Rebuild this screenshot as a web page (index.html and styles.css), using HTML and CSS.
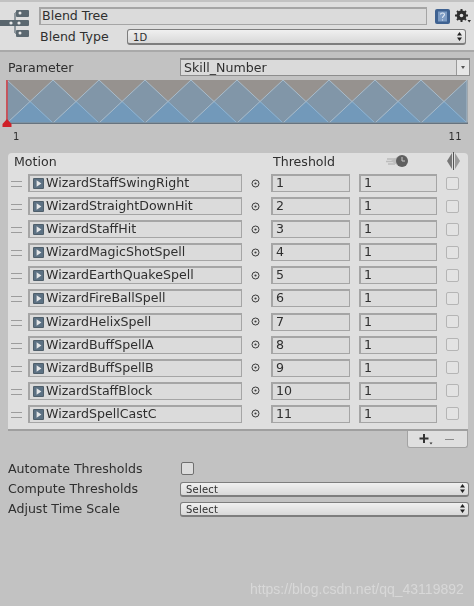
FILE: index.html
```html
<!DOCTYPE html>
<html lang="en">
<head>
<meta charset="utf-8">
<title>Blend Tree</title>
<link rel="stylesheet" href="styles.css">
</head>
<body>
<svg class="defs" width="0" height="0" aria-hidden="true">
  <symbol id="clip" viewBox="0 0 11 11">
    <rect width="11" height="11" rx="1" fill="#4f5f6b"/>
    <rect x="1" y="1" width="9" height="9" fill="#5c7183"/>
    <path d="M3.6 2.2 8.4 5.5 3.6 8.8Z" fill="#e4e6e8"/>
  </symbol>
  <symbol id="target" viewBox="0 0 9 9">
    <circle cx="4.5" cy="4.5" r="3.5" fill="none" stroke="#3c3c3c" stroke-width="1"/>
    <circle cx="4.5" cy="4.5" r="1.1" fill="#3c3c3c"/>
  </symbol>
  <symbol id="updown" viewBox="0 0 5 9">
    <path d="M2.5 0 5 3.4H0ZM2.5 9 0 5.6H5Z" fill="#222"/>
  </symbol>
</svg>

<header class="head">
  <svg class="tree" viewBox="0 0 30 30" aria-hidden="true">
    <path d="M5 15H22M15 5V25M15 5H20M15 25H20" stroke="#8f989e" stroke-width="2" fill="none"/>
    <rect x="0" y="12" width="14" height="6" fill="#59656d"/>
    <rect x="9" y="12" width="20" height="6" rx="1" fill="#5b6870"/>
    <rect x="16" y="2" width="13" height="7" rx="1" fill="#5b6870"/>
    <rect x="16" y="22" width="13" height="7" rx="1" fill="#5b6870"/>
    <circle cx="11" cy="15" r="1.6" fill="#e8e8e8"/>
    <circle cx="19" cy="15" r="1.6" fill="#e8e8e8"/>
    <circle cx="20" cy="5" r="1.5" fill="#e8e8e8"/>
    <circle cx="20" cy="25" r="1.5" fill="#e8e8e8"/>
  </svg>
  <div class="head-main">
    <div class="head-top">
      <div class="field name">Blend Tree</div>
      <svg class="help" viewBox="0 0 15 15" aria-hidden="true">
        <rect width="15" height="15" rx="2" fill="#3f6291"/>
        <rect x="3" y="2.5" width="9" height="10" fill="#7d9cc4"/>
        <path d="M5.5 5.5C5.5 3.5 9.5 3.5 9.5 5.5 9.5 7 7.5 7 7.5 9M7.5 10.5V11.5" fill="none" stroke="#dfe8f3" stroke-width="1.1"/>
      </svg>
      <svg class="gear" viewBox="0 0 16 15" aria-hidden="true">
        <circle cx="6.5" cy="6.5" r="3.7" fill="none" stroke="#2e2e2e" stroke-width="2.4"/>
        <path d="M6.5 0V13M0 6.5H13M2 2 11 11M11 2 2 11" stroke="#2e2e2e" stroke-width="2" />
        <circle cx="6.5" cy="6.5" r="1.8" fill="#dedede"/>
        <path d="M12.5 11H16L14.2 13.5Z" fill="#2e2e2e"/>
      </svg>
    </div>
    <div class="head-type">
      <span class="type-label">Blend Type</span>
      <div class="popup type-popup"><span>1D</span><svg class="updown"><use href="#updown"/></svg></div>
    </div>
  </div>
</header>

<section class="param">
  <span class="param-label">Parameter</span>
  <div class="param-field"><span class="param-value">Skill_Number</span><span class="param-drop"><i></i></span></div>
</section>

<section class="graph-wrap">
  <svg class="graph" viewBox="0 0 461 44" aria-hidden="true">
    <rect width="461" height="43" fill="#96928f"/>
    <g class="tri">
      <polygon points="0,0 46,43 0,43"/>
      <polygon points="46,0 92,43 0,43"/>
      <polygon points="92,0 138,43 46,43"/>
      <polygon points="138,0 184,43 92,43"/>
      <polygon points="184,0 230,43 138,43"/>
      <polygon points="230,0 276,43 184,43"/>
      <polygon points="276,0 322,43 230,43"/>
      <polygon points="322,0 368,43 276,43"/>
      <polygon points="368,0 414,43 322,43"/>
      <polygon points="414,0 460,43 368,43"/>
      <polygon points="460,0 460,43 414,43"/>
    </g>
    <rect y="42.6" width="461" height="1.2" fill="#55626e"/>
  </svg>
  <svg class="marker" viewBox="0 0 10 48" aria-hidden="true">
    <rect x="4.3" y="0" width="1.3" height="42" fill="#d0242c"/>
    <path d="M5 39 9.5 44V47H.5V44Z" fill="#cf2028"/>
  </svg>
  <div class="scale"><span>1</span><span>11</span></div>
</section>

<section class="list">
  <div class="list-head">
    <span class="h-motion">Motion</span>
    <span class="h-threshold">Threshold</span>
    <svg class="h-speed" viewBox="0 0 26 14" aria-hidden="true">
      <path d="M1 5H9M0 7.5H9M2 10H9" stroke="#bcbcbc" stroke-width="1.3"/>
      <path d="M5 7 11 3V11Z" fill="#bdbdbd"/>
      <circle cx="16" cy="7" r="6" fill="#5f5f5f"/>
      <path d="M16 3V7H19" fill="none" stroke="#c9c9c9" stroke-width="1"/>
    </svg>
    <svg class="h-mirror" viewBox="0 0 15 18" aria-hidden="true">
      <path d="M6 1 1 9 6 17Z" fill="#777"/>
      <path d="M9 1 14 9 9 17Z" fill="#9a9a9a"/>
      <path d="M7.5 0V18" stroke="#555" stroke-width="1"/>
    </svg>
  </div>
  <div class="rows">
    <div class="row"><span class="grip"></span><div class="field motion"><svg class="clip"><use href="#clip"/></svg>WizardStaffSwingRight</div><svg class="target"><use href="#target"/></svg><div class="field num">1</div><div class="field num num2">1</div><span class="check"></span></div>
    <div class="row"><span class="grip"></span><div class="field motion"><svg class="clip"><use href="#clip"/></svg>WizardStraightDownHit</div><svg class="target"><use href="#target"/></svg><div class="field num">2</div><div class="field num num2">1</div><span class="check"></span></div>
    <div class="row"><span class="grip"></span><div class="field motion"><svg class="clip"><use href="#clip"/></svg>WizardStaffHit</div><svg class="target"><use href="#target"/></svg><div class="field num">3</div><div class="field num num2">1</div><span class="check"></span></div>
    <div class="row"><span class="grip"></span><div class="field motion"><svg class="clip"><use href="#clip"/></svg>WizardMagicShotSpell</div><svg class="target"><use href="#target"/></svg><div class="field num">4</div><div class="field num num2">1</div><span class="check"></span></div>
    <div class="row"><span class="grip"></span><div class="field motion"><svg class="clip"><use href="#clip"/></svg>WizardEarthQuakeSpell</div><svg class="target"><use href="#target"/></svg><div class="field num">5</div><div class="field num num2">1</div><span class="check"></span></div>
    <div class="row"><span class="grip"></span><div class="field motion"><svg class="clip"><use href="#clip"/></svg>WizardFireBallSpell</div><svg class="target"><use href="#target"/></svg><div class="field num">6</div><div class="field num num2">1</div><span class="check"></span></div>
    <div class="row"><span class="grip"></span><div class="field motion"><svg class="clip"><use href="#clip"/></svg>WizardHelixSpell</div><svg class="target"><use href="#target"/></svg><div class="field num">7</div><div class="field num num2">1</div><span class="check"></span></div>
    <div class="row"><span class="grip"></span><div class="field motion"><svg class="clip"><use href="#clip"/></svg>WizardBuffSpellA</div><svg class="target"><use href="#target"/></svg><div class="field num">8</div><div class="field num num2">1</div><span class="check"></span></div>
    <div class="row"><span class="grip"></span><div class="field motion"><svg class="clip"><use href="#clip"/></svg>WizardBuffSpellB</div><svg class="target"><use href="#target"/></svg><div class="field num">9</div><div class="field num num2">1</div><span class="check"></span></div>
    <div class="row"><span class="grip"></span><div class="field motion"><svg class="clip"><use href="#clip"/></svg>WizardStaffBlock</div><svg class="target"><use href="#target"/></svg><div class="field num">10</div><div class="field num num2">1</div><span class="check"></span></div>
    <div class="row"><span class="grip"></span><div class="field motion"><svg class="clip"><use href="#clip"/></svg>WizardSpellCastC</div><svg class="target"><use href="#target"/></svg><div class="field num">11</div><div class="field num num2">1</div><span class="check"></span></div>
  </div>
</section>
<div class="list-foot">
  <div class="foot-tab">
    <svg class="plus" viewBox="0 0 14 12" aria-hidden="true"><path d="M5 1V10M.5 5.5H9.5" stroke="#333" stroke-width="2"/><path d="M10.5 9.5H13.5L12 11.5Z" fill="#333"/></svg>
    <span class="minus"></span>
  </div>
</div>

<section class="options">
  <div class="opt"><span class="opt-label">Automate Thresholds</span><span class="check check-auto"></span></div>
  <div class="opt"><span class="opt-label">Compute Thresholds</span><div class="popup opt-popup"><span>Select</span><svg class="updown"><use href="#updown"/></svg></div></div>
  <div class="opt"><span class="opt-label">Adjust Time Scale</span><div class="popup opt-popup"><span>Select</span><svg class="updown"><use href="#updown"/></svg></div></div>
</section>

<div class="watermark">https://blog.csdn.net/qq_43119892</div>
</body>
</html>
```

FILE: styles.css
```css
* { box-sizing: border-box; }
html, body { margin: 0; height: 606px; overflow: hidden; }
body {
  width: 474px;
  background: #c2c2c2;
  color: #2f2f2f;
  font-family: "DejaVu Sans", sans-serif;
  font-size: 12.6px;
  display: flex;
  flex-direction: column;
  filter: blur(0.35px);
}
.defs { position: absolute; }

.head {
  height: 50px;
  margin-top: 2px;
  padding: 5px 4px 0 0;
  background: #dedede;
  border-bottom: 2px solid #a9a9a9;
  display: flex;
  flex-shrink: 0;
}
.tree { width: 30px; height: 30px; margin-top: 1px; flex-shrink: 0; }
.head-main { flex: 1; margin-left: 9px; display: flex; flex-direction: column; gap: 3px; }
.head-top { display: flex; align-items: center; height: 18px; }
.field {
  background: #dbdbdb;
  border: 2px solid #a5a5a5;
  border-width: 2px 1px 1px 2px;
  display: flex;
  align-items: center;
  white-space: nowrap;
  padding-bottom: 2px;
}
.name { width: 388px; height: 18px; padding-left: 1px; }
.help { width: 15px; height: 15px; margin-left: 8px; }
.gear { width: 16px; height: 15px; margin-left: 5px; }
.head-type { display: flex; align-items: center; height: 17px; }
.type-label { width: 88px; padding-left: 1px; }
.popup {
  border: 1px solid #7d7d7d;
  border-bottom-width: 2px;
  border-radius: 3px;
  background: linear-gradient(#f0f0f0, #d8d8d8);
  display: flex;
  align-items: center;
  justify-content: space-between;
  font-size: 10px;
  padding: 0 3px 0 5px;
  letter-spacing: 0.2px;
}
.popup span { padding-top: 2px; }
.type-popup { width: 339px; height: 16px; padding-left: 5px; }
.updown { width: 5px; height: 9px; flex-shrink: 0; }

.param {
  display: flex;
  align-items: center;
  height: 18px;
  margin-top: 6px;
  padding-left: 8px;
  flex-shrink: 0;
}
.param-label { width: 172px; }
.param-field {
  width: 290px;
  height: 18px;
  background: #dadada;
  border: 1px solid #8d8d8d;
  border-top-width: 2px;
  display: flex;
  align-items: center;
  justify-content: space-between;
}
.param-value { padding-left: 3px; }
.param-drop {
  width: 13px;
  height: 100%;
  background: #e6e6e6;
  border-left: 1px solid #9a9a9a;
  display: flex;
  align-items: center;
  justify-content: center;
}
.param-drop i {
  border-left: 2px solid transparent;
  border-right: 2px solid transparent;
  border-top: 3px solid #555;
}

.graph-wrap { position: relative; margin: 4px 0 0 7px; width: 461px; flex-shrink: 0; }
.graph { display: block; width: 461px; height: 44px; }
.tri polygon { fill: rgb(77, 160, 233); fill-opacity: 0.28; stroke: #a9bccb; stroke-width: 1; }
.marker { position: absolute; left: -5px; top: 0; width: 10px; height: 48px; }
.scale {
  display: flex;
  justify-content: space-between;
  padding: 7px 6px 0 6px;
  font-size: 10px;
  height: 19px;
  letter-spacing: 0.4px;
}

.list {
  margin: 10px 6px 0 8px;
  height: 278px;
  background: #dfdfdf;
  border-radius: 4px 4px 0 0;
  border-bottom: 2px solid #9f9f9f;
  flex-shrink: 0;
}
.list-head { display: flex; align-items: center; height: 21px; padding-bottom: 5px; position: relative; }
.h-motion { width: 265px; padding-left: 6px; }
.h-threshold { width: 113px; }
.h-speed { width: 26px; height: 14px; }
.h-mirror { width: 15px; height: 18px; margin-left: 34px; }
.rows { display: flex; flex-direction: column; gap: 5.1px; }
.row { display: flex; align-items: center; height: 18px; padding-left: 3px; }
.grip {
  width: 11px;
  height: 6px;
  margin-top: 2px;
  border-top: 1px solid #9c9c9c;
  border-bottom: 1px solid #9c9c9c;
}
.motion { width: 214px; height: 18px; margin-left: 6px; padding-left: 3px; gap: 2px; }
.clip { width: 11px; height: 11px; flex-shrink: 0; margin-top: 2px; }
.target { width: 9px; height: 9px; margin: 0 11px 0 9px; flex-shrink: 0; }
.num { width: 79px; height: 18px; padding-left: 3px; }
.num2 { margin-left: 9px; width: 78px; }
.check {
  width: 13px;
  height: 13px;
  margin-left: 9px;
  background: #e3e3e3;
  border: 1px solid #b5b5b5;
  border-radius: 2px;
  flex-shrink: 0;
}

.list-foot { display: flex; justify-content: flex-end; padding-right: 6px; flex-shrink: 0; }
.foot-tab {
  width: 61px;
  height: 17px;
  background: #dfdfdf;
  border: 1px solid #a3a3a3;
  border-top: 0;
  border-radius: 0 0 3px 3px;
  display: flex;
  align-items: center;
  padding-left: 11px;
  gap: 12px;
}
.plus { width: 14px; height: 12px; }
.minus { width: 9px; height: 1px; background: #8b8b8b; }

.options { display: flex; flex-direction: column; margin-top: 10px; padding-left: 8px; flex-shrink: 0; }
.opt { display: flex; align-items: center; height: 20px; }
.opt-label { width: 172px; }
.check-auto { margin-left: 1px; background: #dcdcdc; border-color: #6f6f6f; }
.opt-popup { width: 289px; height: 15px; margin-top: 2px; padding: 0 3px 0 5px; }

.watermark {
  position: absolute;
  left: 250px;
  top: 581px;
  color: #d8d8d8;
  font-family: "Liberation Sans", sans-serif;
  font-size: 14px;
  white-space: nowrap;
}
```
